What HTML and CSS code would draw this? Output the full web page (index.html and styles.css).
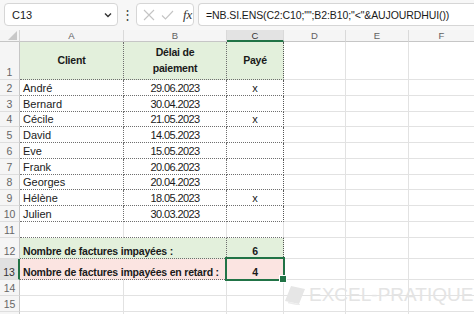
FILE: index.html
```
<!DOCTYPE html>
<html lang="fr">
<head>
  <meta charset="UTF-8">
  <title>NB.SI.ENS - factures en retard</title>
  <link rel="stylesheet" href="styles.css">
</head>
<body>
  <div class="formula-bar">
    <div class="name-box">
      <span>C13</span>
      <svg class="chev" width="8" height="6" viewBox="0 0 8 6"><path d="M1 1.5 L4 4.5 L7 1.5" fill="none" stroke="#333" stroke-width="1.4"/></svg>
    </div>
    <div class="dots">&#8942;</div>
    <div class="fx-box">
      <svg width="12" height="12" viewBox="0 0 12 12"><path d="M1 1 L11 11 M11 1 L1 11" stroke="#c4c4c4" stroke-width="1.1"/></svg>
      <svg width="13" height="12" viewBox="0 0 13 12"><path d="M1 6.5 L4.5 10 L12 2" fill="none" stroke="#c4c4c4" stroke-width="1.1"/></svg>
      <span class="fx">fx</span>
    </div>
    <div class="formula">=NB.SI.ENS(C2:C10;"";B2:B10;"&lt;"&amp;AUJOURDHUI())</div>
  </div>

  <div class="sheet-wrap">
    <div class="sheet">
      <!-- en-têtes de colonnes -->
      <div class="corner"><svg width="9" height="9" viewBox="0 0 9 9"><path d="M9 0 L9 9 L0 9 Z" fill="#c8c8c8"/></svg></div>
      <div class="ch">A</div>
      <div class="ch">B</div>
      <div class="ch ch-sel">C</div>
      <div class="ch">D</div>
      <div class="ch">E</div>
      <div class="ch">F</div>

      <!-- ligne 1 -->
      <div class="rh">1</div>
      <div class="c t hd b mid">Client</div>
      <div class="c t hd b mid">Délai de<br>paiement</div>
      <div class="c t hd b mid tr">Payé</div>
      <div class="c"></div><div class="c"></div><div class="c"></div>

      <div class="rh">2</div>
      <div class="c t">André</div><div class="c t date">29.06.2023</div><div class="c t ctr tr">x</div>
      <div class="c"></div><div class="c"></div><div class="c"></div>

      <div class="rh">3</div>
      <div class="c t">Bernard</div><div class="c t date">30.04.2023</div><div class="c t ctr tr"></div>
      <div class="c"></div><div class="c"></div><div class="c"></div>

      <div class="rh">4</div>
      <div class="c t">Cécile</div><div class="c t date">21.05.2023</div><div class="c t ctr tr">x</div>
      <div class="c"></div><div class="c"></div><div class="c"></div>

      <div class="rh">5</div>
      <div class="c t">David</div><div class="c t date">14.05.2023</div><div class="c t ctr tr"></div>
      <div class="c"></div><div class="c"></div><div class="c"></div>

      <div class="rh">6</div>
      <div class="c t">Eve</div><div class="c t date">15.05.2023</div><div class="c t ctr tr"></div>
      <div class="c"></div><div class="c"></div><div class="c"></div>

      <div class="rh">7</div>
      <div class="c t">Frank</div><div class="c t date">20.06.2023</div><div class="c t ctr tr"></div>
      <div class="c"></div><div class="c"></div><div class="c"></div>

      <div class="rh">8</div>
      <div class="c t">Georges</div><div class="c t date">20.04.2023</div><div class="c t ctr tr"></div>
      <div class="c"></div><div class="c"></div><div class="c"></div>

      <div class="rh">9</div>
      <div class="c t">Hélène</div><div class="c t date">18.05.2023</div><div class="c t ctr tr">x</div>
      <div class="c"></div><div class="c"></div><div class="c"></div>

      <div class="rh">10</div>
      <div class="c t">Julien</div><div class="c t date">30.03.2023</div><div class="c t ctr tr"></div>
      <div class="c"></div><div class="c"></div><div class="c"></div>

      <div class="rh">11</div>
      <div class="c above"></div><div class="c above"></div><div class="c above"></div>
      <div class="c"></div><div class="c"></div><div class="c"></div>

      <div class="rh">12</div>
      <div class="c t hd b span2">Nombre de factures impayées :</div>
      <div class="c t hd b ctr tr">6</div>
      <div class="c"></div><div class="c"></div><div class="c"></div>

      <div class="rh rh-sel">13</div>
      <div class="c t red b span2">Nombre de factures impayées en retard :</div>
      <div class="c t red b ctr tr sel">4</div>
      <div class="c"></div><div class="c"></div><div class="c"></div>

      <div class="rh">14</div>
      <div class="c"></div><div class="c"></div><div class="c"></div>
      <div class="c"></div><div class="c"></div><div class="c"></div>

      <div class="rh">15</div>
      <div class="c"></div><div class="c"></div><div class="c"></div>
      <div class="c"></div><div class="c"></div><div class="c"></div>

      <div class="rh"></div>
      <div class="c"></div><div class="c"></div><div class="c"></div>
      <div class="c"></div><div class="c"></div><div class="c"></div>
    </div>

    <div class="watermark">
      <svg width="22" height="20" viewBox="0 0 22 20"><path d="M7 1 L21 4 L15 19 L1 16 Z" fill="#e6e6e6"/><path d="M4 17.5 L16 20" stroke="#ececec" stroke-width="1.5"/></svg>
      <span>EXCEL-PRATIQUE</span>
    </div>
  </div>
</body>
</html>
```

FILE: styles.css
```
* { box-sizing: border-box; }
html, body {
  margin: 0;
  padding: 0;
  overflow: hidden;
  background: #fff;
}
body {
  font-family: "Liberation Sans", Arial, sans-serif;
  color: #1a1a1a;
  width: 474px;
  height: 314px;
}

/* barre de formule */
.formula-bar {
  display: flex;
  align-items: center;
  height: 30px;
  padding: 3px 0 4px 4px;
  background: #f7f7f7;
}
.name-box {
  width: 114px;
  height: 23px;
  background: #fff;
  border: 1px solid #d6d6d6;
  border-radius: 4px;
  display: flex;
  align-items: center;
  justify-content: space-between;
  padding: 0 5px 0 7px;
  font-size: 11px;
}
.dots {
  width: 18px;
  text-align: center;
  font-size: 13px;
  color: #444;
}
.fx-box {
  width: 58px;
  height: 23px;
  background: #fff;
  border: 1px solid #d6d6d6;
  border-radius: 4px;
  display: flex;
  align-items: center;
  gap: 6px;
  padding-left: 6px;
}
.fx {
  font-family: "Liberation Serif", serif;
  font-style: italic;
  font-size: 13px;
  color: #333;
  margin-left: 3px;
}
.formula {
  flex: 1;
  height: 23px;
  margin-left: 4px;
  background: #fff;
  border: 1px solid #d6d6d6;
  border-right: none;
  border-radius: 4px 0 0 4px;
  display: flex;
  align-items: center;
  padding-left: 7px;
  font-size: 10.5px;
  letter-spacing: -0.1px;
  white-space: nowrap;
  overflow: hidden;
}

/* feuille */
.sheet-wrap {
  position: relative;
}
.sheet {
  display: grid;
  grid-template-columns: 20px 104px 103px 57px 62px 63px 66px;
  grid-template-rows: 12px 38px repeat(10, 15.75px) 21px 21px 16px 16px 16px;
  font-size: 11px;
}
.corner {
  background: #f5f5f5;
  border-right: 1px solid #d4d4d4;
  border-bottom: 1px solid #c6c6c6;
  display: flex;
  align-items: flex-end;
  justify-content: flex-end;
  padding: 0 2px 1px 0;
}
.ch {
  background: #f5f5f5;
  border-right: 1px solid #d9d9d9;
  border-bottom: 1px solid #c6c6c6;
  color: #616161;
  font-size: 9.5px;
  text-align: center;
  line-height: 11px;
}
.ch-sel {
  background: #e3e3e3;
  border-bottom: 2px solid #217346;
  color: #333;
}
.rh {
  background: #f5f5f5;
  border-right: 1px solid #c6c6c6;
  border-bottom: 1px solid #dedede;
  color: #666;
  font-size: 10.5px;
  display: flex;
  align-items: flex-end;
  justify-content: center;
  padding-bottom: 1px;
}
.rh-sel {
  background: #e1e1e1;
  border-right: 2px solid #217346;
  color: #333;
}
.c {
  border-right: 1px solid #e2e2e2;
  border-bottom: 1px solid #e2e2e2;
  display: flex;
  align-items: flex-end;
  padding: 0 3px 1px;
  white-space: nowrap;
}
.t {
  border-right: 1px dotted #6e6e6e;
  border-bottom: 1px dotted #6e6e6e;
}
.tr { border-right-color: #555; }
.above { border-bottom: 1px dotted #6e6e6e; }
.hd { background: #e3f0dc; }
.red { background: #fbe4e1; }
.b {
  font-weight: bold;
  font-size: 10.5px;
  letter-spacing: -0.2px;
}
.mid {
  align-items: center;
  justify-content: center;
  text-align: center;
  line-height: 16px;
}
.ctr { justify-content: center; }
.date {
  justify-content: center;
  letter-spacing: -0.6px;
}
.span2 { grid-column: span 2; }
.sel { position: relative; }
.sel::after {
  content: "";
  position: absolute;
  left: -2px;
  top: -2px;
  right: -2px;
  bottom: -2px;
  border: 2px solid #217346;
}
.sel::before {
  content: "";
  position: absolute;
  right: -4px;
  bottom: -4px;
  width: 6px;
  height: 6px;
  background: #217346;
  border: 1px solid #fff;
  z-index: 1;
}

/* filigrane */
.watermark {
  position: absolute;
  left: 284px;
  top: 254px;
  display: flex;
  align-items: center;
  gap: 3px;
  color: #e4e4e4;
  font-size: 19px;
  white-space: nowrap;
}
```
